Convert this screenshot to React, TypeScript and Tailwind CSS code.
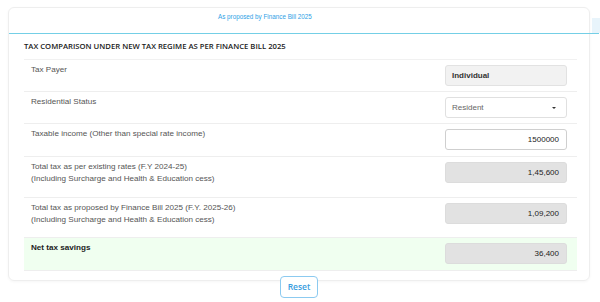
import React from "react";

type Row = {
  label: string[];
  height: string;
  kind: "plain" | "select" | "input" | "readonly";
  value: string;
  bold?: boolean;
  highlight?: boolean;
};

const rows: Row[] = [
  { label: ["Tax Payer"], height: "h-[32px]", kind: "plain", value: "Individual" },
  { label: ["Residential Status"], height: "h-[32px]", kind: "select", value: "Resident" },
  { label: ["Taxable income (Other than special rate income)"], height: "h-[33px]", kind: "input", value: "1500000" },
  {
    label: ["Total tax as per existing rates (F.Y 2024-25)", "(Including Surcharge and Health & Education cess)"],
    height: "h-[41px]",
    kind: "readonly",
    value: "1,45,600",
  },
  {
    label: ["Total tax as proposed by Finance Bill 2025 (F.Y. 2025-26)", "(Including Surcharge and Health & Education cess)"],
    height: "h-[40px]",
    kind: "readonly",
    value: "1,09,200",
  },
  { label: ["Net tax savings"], height: "h-[33px]", kind: "readonly", value: "36,400", bold: true, highlight: true },
];

function Field({ row }: { row: Row }) {
  if (row.kind === "plain") {
    return (
      <div className="mt-[5px] flex h-[21px] w-[122px] items-center rounded-[3px] border border-[#e2e2e2] bg-[#f2f2f2] px-[6px] text-[8px] font-bold text-[#333]">
        {row.value}
      </div>
    );
  }
  if (row.kind === "select") {
    return (
      <div className="mt-[5px] flex h-[21px] w-[122px] items-center justify-between rounded-[3px] border border-[#e0e0e0] bg-white pl-[6px] pr-[10px] text-[8px] text-[#666]">
        <span>{row.value}</span>
        <span className="h-0 w-0 border-l-[2px] border-r-[2px] border-t-[2px] border-l-transparent border-r-transparent border-t-[#333]" />
      </div>
    );
  }
  if (row.kind === "input") {
    return (
      <div className="mt-[5px] flex h-[21px] w-[122px] items-center justify-end rounded-[3px] border border-[#cfcfcf] bg-white px-[7px] text-[8px] text-[#222]">
        {row.value}
      </div>
    );
  }
  return (
    <div className="mt-[5px] flex h-[21px] w-[122px] items-center justify-end rounded-[3px] border border-[#dcdcdc] bg-[#e2e2e2] px-[7px] text-[8px] text-[#222]">
      {row.value}
    </div>
  );
}

export default function App() {
  return (
    <div className="relative h-[302px] w-[600px] overflow-hidden bg-white font-['Liberation_Sans',Arial,sans-serif]">
      <div className="absolute right-0 top-[18px] h-[15px] w-[8px] bg-[#e8f4fb]" />
      <div className="ml-[8px] pt-[7px]">
        <div className="w-[582px] rounded-[6px] border border-[#eeeeee] shadow-[0_1px_3px_rgba(0,0,0,0.04)]">
          <div className="-mr-[10px] h-[26px] border-b border-[#74cfe6] pl-[209px] pt-[5px] text-[6.3px] leading-[8px] text-[#2f9fe6]">
            As proposed by Finance Bill 2025
          </div>
          <div className="h-[25px] pl-[15px] pt-[7px] font-['Open_Sans',sans-serif] text-[7.7px] font-semibold leading-[10px] text-[#1a1a1a]">
            TAX COMPARISON UNDER NEW TAX REGIME AS PER FINANCE BILL 2025
          </div>
          <div className="ml-[15px] mr-[12px] border-t border-[#f1f1f1]">
            {rows.map((row) => (
              <div
                key={row.label[0]}
                className={`flex items-start justify-between border-b border-[#eeeeee] ${row.height} ${
                  row.highlight ? "bg-[#f0fff0]" : ""
                }`}
              >
                <div
                  className={`pl-[7px] pt-[4px] text-[8.1px] leading-[12px] ${
                    row.bold ? "font-bold text-[#222]" : "text-[#555]"
                  }`}
                >
                  {row.label.map((line) => (
                    <div key={line}>{line}</div>
                  ))}
                </div>
                <div className="mr-[10px]">
                  <Field row={row} />
                </div>
              </div>
            ))}
          </div>
          <div className="h-[9px]" />
        </div>
        <div className="relative -mt-[5px] flex w-[582px] justify-center">
          <button className="h-[22px] w-[38px] rounded-[4px] border border-[#8ccaf0] bg-white font-['Open_Sans',sans-serif] text-[8.5px] font-semibold text-[#3a9ee0]">
            Reset
          </button>
        </div>
      </div>
    </div>
  );
}
